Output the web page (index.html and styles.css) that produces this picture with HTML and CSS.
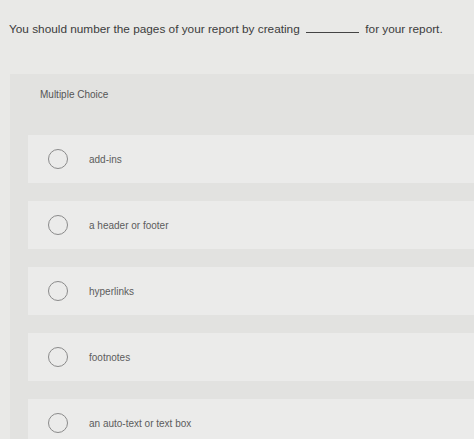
FILE: index.html
```html
<!DOCTYPE html>
<html lang="en">
<head>
    <meta charset="utf-8">
    <title>Multiple Choice</title>
    <link rel="stylesheet" href="styles.css">
</head>
<body>

<div class="question">
    You should number the pages of your report by creating <span class="blank"></span> for your report.
</div>

<div class="panel">
    <div class="kind">Multiple Choice</div>

    <div class="choices">
        <label class="choice"><span class="radio"></span><span class="answer">add-ins</span></label>
        <label class="choice"><span class="radio"></span><span class="answer">a header or footer</span></label>
        <label class="choice"><span class="radio"></span><span class="answer">hyperlinks</span></label>
        <label class="choice"><span class="radio"></span><span class="answer">footnotes</span></label>
        <label class="choice"><span class="radio"></span><span class="answer">an auto-text or text box</span></label>
    </div>
</div>

</body>
</html>
```

FILE: styles.css
```css
body {
    font-family: 'Liberation Sans', Arial, sans-serif;
    background-color: #e9e9e7;
    margin: 0;
    overflow: hidden;
}
.question {
    padding: 22px 0 0 9px;
    height: 74px;
    box-sizing: border-box;
    font-size: 11.8px;
    color: #3c3c3c;
}
.blank {
    display: inline-block;
    width: 53px;
    border-bottom: 1px solid #444;
    margin: 0 3px;
}
.panel {
    margin-left: 10px;
    background-color: #e2e2e0;
    padding: 15px 0 0 0;
}
.kind {
    padding-left: 30px;
    font-size: 10px;
    color: #555;
    height: 46px;
}
.choices {
    display: flex;
    flex-direction: column;
    gap: 18px;
    padding-left: 18px;
}
.choice {
    display: flex;
    align-items: center;
    height: 48px;
    background-color: #ebebea;
}
.radio {
    width: 18px;
    height: 18px;
    border: 1.5px solid #8a8a8a;
    border-radius: 50%;
    margin-left: 20px;
}
.answer {
    margin-left: 21px;
    font-size: 10px;
    color: #5c5c5c;
}
```
